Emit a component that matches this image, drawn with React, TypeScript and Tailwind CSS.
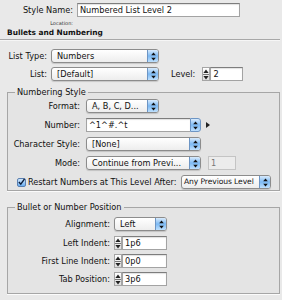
import type { ReactNode } from 'react';

function Arrows() {
  return (
    <svg width="5" height="9" viewBox="0 0 5 9">
      <path d="M2.5 0.5 L4.8 3.3 L0.2 3.3 Z" fill="#111" />
      <path d="M2.5 8.5 L4.8 5.7 L0.2 5.7 Z" fill="#111" />
    </svg>
  );
}

function Popup({ className, textClass = 'pl-[5px]', children }: { className: string; textClass?: string; children: ReactNode }) {
  return (
    <div
      className={`flex h-[14px] items-stretch overflow-hidden rounded-[3px] border border-[#8c8c8c] bg-gradient-to-b from-white to-[#ededed] shadow-[0_1px_1px_rgba(0,0,0,0.15)] ${className}`}
    >
      <div className={`flex flex-1 items-center overflow-hidden whitespace-nowrap leading-none ${textClass}`}>{children}</div>
      <div className="flex w-[11px] shrink-0 items-center justify-center border-l border-[#6d95c4] bg-gradient-to-b from-[#d9ebfc] via-[#7cb9f3] to-[#bfe0fd]">
        <Arrows />
      </div>
    </div>
  );
}

function Field({ className, children, disabled }: { className: string; children?: ReactNode; disabled?: boolean }) {
  return (
    <div
      className={`flex h-[14px] items-center border pl-[2px] leading-none ${
        disabled
          ? 'border-[#c4c4c4] bg-[#ececec] text-[#777]'
          : 'border-[#a3a3a3] border-t-[#7d7d7d] bg-white shadow-[inset_0_1px_1px_rgba(0,0,0,0.12)]'
      } ${className}`}
    >
      {children}
    </div>
  );
}

function Stepper() {
  return (
    <div className="flex h-[14px] w-[8px] items-center justify-center border border-[#a5a5a5] bg-gradient-to-b from-white to-[#dedede]">
      <svg width="6" height="11" viewBox="0 0 6 11">
        <path d="M3 0.5 L5.6 4 L0.4 4 Z" fill="#222" />
        <line x1="0" y1="5.5" x2="6" y2="5.5" stroke="#777" strokeWidth="1" />
        <path d="M3 10.5 L5.6 7 L0.4 7 Z" fill="#222" />
      </svg>
    </div>
  );
}

export default function App() {
  return (
    <div
      className="h-[300px] w-[282px] overflow-hidden bg-[#e9e9e9] text-[8.2px] text-[#111]"
      style={{ fontFamily: '"Lucida Grande", "DejaVu Sans", sans-serif' }}
    >
      {/* Header */}
      <div className="pt-[3px]">
        <div className="flex h-[14px] items-center">
          <div className="w-[73px] text-right">Style Name:</div>
          <Field className="ml-[4px] w-[163px]">Numbered List Level 2</Field>
        </div>
        <div className="mt-[3px] h-[6px] w-[73px] text-right text-[5px] leading-[6px] text-[#333]">Location:</div>
        <div className="mt-[2px] flex h-[10px] items-center pl-[7px] text-[7.4px] font-bold">Bullets and Numbering</div>
        <div className="mt-px h-px w-[280px] bg-[#a8a8a8]" />
        <div className="h-px w-[280px] bg-[#f6f6f6]" />
      </div>

      {/* List type */}
      <div className="mt-[8px] flex h-[14px] items-center">
        <div className="w-[47px] text-right">List Type:</div>
        <Popup className="ml-[4px] w-[108px]">Numbers</Popup>
      </div>
      <div className="mt-[4px] flex h-[14px] items-center">
        <div className="w-[47px] text-right">List:</div>
        <Popup className="ml-[4px] w-[108px]">[Default]</Popup>
        <div className="ml-[12px]">Level:</div>
        <div className="ml-[7px] flex">
          <Stepper />
          <Field className="w-[33px]">2</Field>
        </div>
      </div>

      {/* Numbering Style */}
      <fieldset className="ml-[7px] mt-[6px] w-[273px] border border-[#a6a6a6] bg-[#e4e4e4] pb-[1px] shadow-[0_1px_0_rgba(255,255,255,0.8)]">
        <legend className="ml-[7px] h-[10px] px-[2px] leading-[10px]">Numbering Style</legend>
        <div className="mt-[2px] flex flex-col gap-[5px]">
          <div className="flex h-[14px] items-center">
            <div className="w-[72px] text-right">Format:</div>
            <Popup className="ml-[6px] w-[73px]">A, B, C, D...</Popup>
          </div>
          <div className="flex h-[14px] items-center">
            <div className="w-[72px] text-right">Number:</div>
            <div className="ml-[6px] flex w-[115px]">
              <Field className="flex-1 border-r-0">^1^#.^t</Field>
              <div className="flex h-[14px] w-[11px] items-center justify-center rounded-r-[3px] border border-[#6d95c4] bg-gradient-to-b from-[#d9ebfc] via-[#7cb9f3] to-[#bfe0fd]">
                <Arrows />
              </div>
            </div>
            <svg className="ml-[5px]" width="4" height="6" viewBox="0 0 4 6">
              <path d="M0 0 L4 3 L0 6 Z" fill="#222" />
            </svg>
          </div>
          <div className="flex h-[14px] items-center">
            <div className="w-[72px] text-right">Character Style:</div>
            <Popup className="ml-[6px] w-[115px]">[None]</Popup>
          </div>
          <div className="flex h-[14px] items-center">
            <div className="w-[72px] text-right">Mode:</div>
            <Popup className="ml-[6px] w-[115px]">Continue from Previ...</Popup>
            <Field className="ml-[7px] w-[28px]" disabled>
              1
            </Field>
          </div>
          <div className="flex h-[14px] items-center">
            <div className="ml-[9px] flex h-[9px] w-[9px] items-center justify-center rounded-[2px] border border-[#5a7fb0] bg-gradient-to-b from-[#cfe6fb] to-[#6aaef0]">
              <svg width="8" height="8" viewBox="0 0 8 8">
                <path d="M1 4 L3.2 6.5 L7.5 0.5" stroke="#0d1e3a" strokeWidth="1.6" fill="none" />
              </svg>
            </div>
            <div className="ml-[2px] whitespace-nowrap">Restart Numbers at This Level After:</div>
            <Popup className="ml-auto mr-[8px] w-[90px]" textClass="pl-[2px] text-[7.6px] tracking-[-0.1px]">
              Any Previous Level
            </Popup>
          </div>
        </div>
      </fieldset>

      {/* Bullet or Number Position */}
      <fieldset className="ml-[7px] mt-[11px] w-[273px] border border-[#a6a6a6] bg-[#e4e4e4] pb-[7px] shadow-[0_1px_0_rgba(255,255,255,0.8)]">
        <legend className="ml-[7px] h-[10px] px-[2px] leading-[10px]">Bullet or Number Position</legend>
        <div className="mt-[5px] flex h-[14px] items-center">
          <div className="w-[102px] text-right">Alignment:</div>
          <Popup className="ml-[4px] w-[53px]">Left</Popup>
        </div>
        <div className="mt-[5px] flex flex-col gap-[4px]">
          {[
            ['Left Indent:', '1p6'],
            ['First Line Indent:', '0p0'],
            ['Tab Position:', '3p6'],
          ].map(([label, value]) => (
            <div key={label} className="flex h-[14px] items-center">
              <div className="w-[102px] text-right">{label}</div>
              <div className="ml-[4px] flex">
                <Stepper />
                <Field className="w-[45px]">{value}</Field>
              </div>
            </div>
          ))}
        </div>
      </fieldset>
    </div>
  );
}
